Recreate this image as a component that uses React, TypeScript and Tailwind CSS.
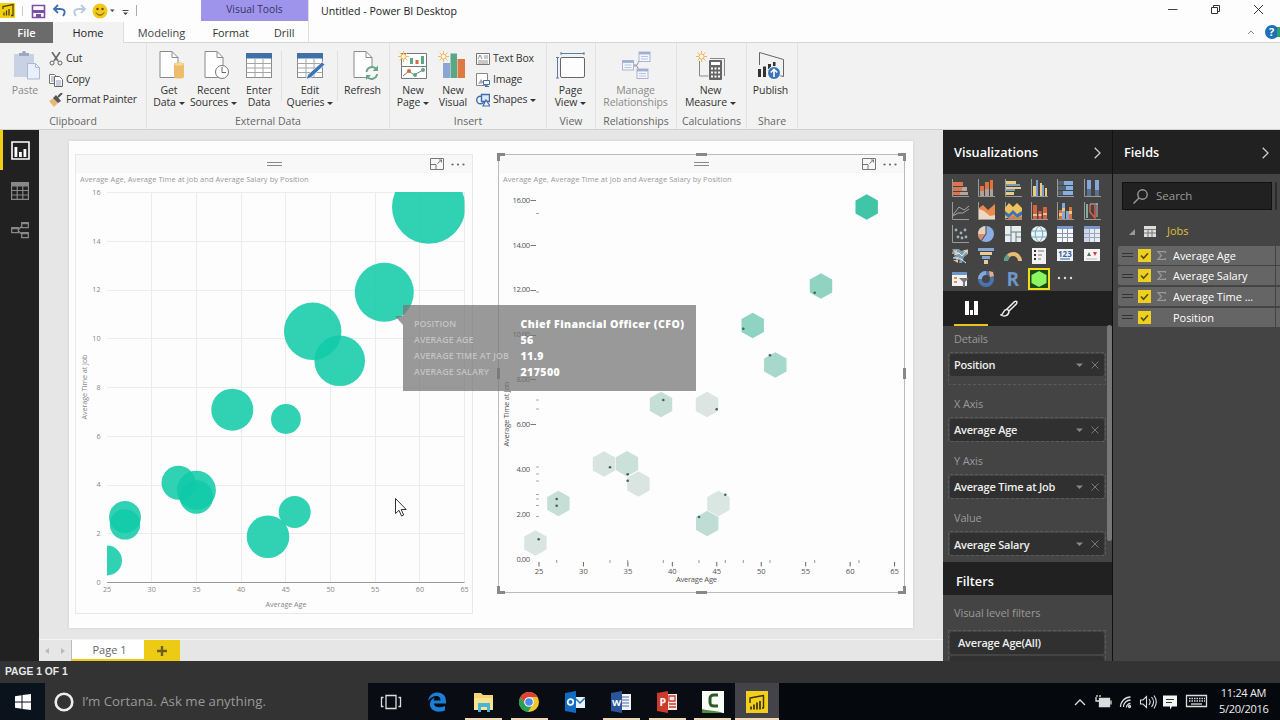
import type { ReactNode } from 'react';
import { clsx } from 'clsx';

/* ---------- chart data ---------- */

const BUBBLES = [
    { x: 428.7, y: 207, r: 36.7 },
    { x: 384.3, y: 292.3, r: 29.5 },
    { x: 312.7, y: 331.3, r: 28.7 },
    { x: 339.7, y: 360.8, r: 25.3 },
    { x: 232.3, y: 409.7, r: 21 },
    { x: 285.9, y: 419, r: 14.9 },
    { x: 178.5, y: 482.7, r: 17 },
    { x: 196.4, y: 490.2, r: 19.5 },
    { x: 196.4, y: 497, r: 16.7 },
    { x: 125, y: 517, r: 16 },
    { x: 125, y: 524.4, r: 15.2 },
    { x: 107, y: 560.5, r: 15 },
    { x: 294.7, y: 512, r: 16 },
    { x: 268, y: 536.7, r: 21.3 },
];

const HEXES = [
    { x: 866.7, y: 207, fill: '#41c5a7' },
    { x: 821, y: 286, fill: '#90d3c1' },
    { x: 752.7, y: 325.5, fill: '#8fd4c2' },
    { x: 775.3, y: 365, fill: '#a6d8cb' },
    { x: 661, y: 404.5, fill: '#c5dfd7' },
    { x: 707, y: 404.5, fill: '#dce5e2' },
    { x: 604, y: 464, fill: '#d8e4e0' },
    { x: 627, y: 463.7, fill: '#cae1d9' },
    { x: 638.4, y: 484, fill: '#dae5e1' },
    { x: 558.4, y: 503.5, fill: '#c5ded6' },
    { x: 535.4, y: 543, fill: '#dae4e1' },
    { x: 718.4, y: 503.5, fill: '#d9e6e1' },
    { x: 707.2, y: 523.5, fill: '#bfddd5' },
];

const DOTS = [
    [814.7, 292.7], [743.3, 328.7], [770, 355.3], [663.3, 400], [716.7, 409.3],
    [610, 467.3], [627.7, 474.3], [627.7, 480.7], [556.7, 499], [556.7, 505.7],
    [538.7, 539.3], [725.3, 494.7], [699, 517],
];

const RUG_X = [556.7, 610, 627.7, 663.3, 699, 725.3, 743.3, 770, 814.7, 859];
const RUG_Y = [213.5, 292, 400, 409, 467, 474, 481, 494.5, 499, 505.5, 516.5];
const AGES = [25, 30, 35, 40, 45, 50, 55, 60, 65];
const YEARS = [0, 2, 4, 6, 8, 10, 12, 14, 16];

/* ---------- ribbon ---------- */

function Caret() {
    return <span className="ml-[3px] inline-block border-x-[3px] border-t-[3px] border-x-transparent border-t-[#333] align-middle" />;
}

function Group({ label, width, children }: { label: string; width: string; children: ReactNode }) {
    return (
        <div className={clsx('flex h-full shrink-0 flex-col border-r border-[#e2e2e2]', width)}>
            <div className="flex h-[71px] shrink-0">{children}</div>
            <div className="text-center text-[10.5px] leading-[14px] text-[#666]">{label}</div>
        </div>
    );
}

interface BigButtonProps {
    lines: string[];
    width: string;
    caret?: boolean;
    muted?: boolean;
    children: ReactNode;
}

function BigButton({ lines, width, caret, muted, children }: BigButtonProps) {
    return (
        <button className={clsx('flex shrink-0 flex-col items-center pt-2 text-[10.5px] leading-[12px] tracking-[-0.080px]', width, muted ? 'text-[#8a8a8a]' : 'text-[#333]')}>
            <svg width="30" height="29" viewBox="0 0 30 29" fill="none" className="mb-1 shrink-0">{children}</svg>
            {lines.map((line, i) => (
                <span key={line} className="whitespace-nowrap">
                    {line}
                    {caret && i === lines.length - 1 && <Caret />}
                </span>
            ))}
        </button>
    );
}

function SmallButton({ label, caret, children }: { label: string; caret?: boolean; children: ReactNode }) {
    return (
        <button className="flex h-[20.5px] items-center gap-[3px] text-[10.5px] tracking-[-0.170px] whitespace-nowrap text-[#333]">
            <svg width="14" height="14" viewBox="0 0 14 14" fill="none">{children}</svg>
            <span>
                {label}
                {caret && <Caret />}
            </span>
        </button>
    );
}

function Doc() {
    return (
        <>
            <path d="M6 .5h12l6 6v20H6z" fill="#fefefe" stroke="#8a8a8a" />
            <path d="M18 .5v6h6" stroke="#8a8a8a" />
        </>
    );
}

function Sheet() {
    return (
        <>
            <rect x="2.5" y="2.5" width="25" height="24" fill="#fff" stroke="#8b8b8b" />
            <path d="M2 2h26v5.5H2z" fill="#3f6fa8" />
            <path d="M2.5 12.5h25M2.5 17h25M2.5 21.500h25M11 8v18.500M19 8v18.500" stroke="#a5a5a5" />
        </>
    );
}

function Spark() {
    return (
        <g stroke="#f0b860">
            <path d="M5.500 0v11M0 5.500h11M1.600 1.600l7.800 7.800M9.400 1.600l-7.800 7.800" />
            <circle cx="5.500" cy="5.500" r="2.500" fill="#fff6e0" />
        </g>
    );
}

function Ribbon() {
    return (
        <div className="flex h-[87px] shrink-0 border-b border-[#d0d0d0] bg-[#f2f2f2]">
            <Group label="Clipboard" width="w-[147px]">
                <BigButton lines={['Paste']} width="ml-1 w-[42px]" muted>
                    <path d="M4 3h20v23H4z" fill="#c9d2e4" />
                    <path d="M9 5V2h3a2 2 0 014 0h3v3z" fill="#9aa9c0" />
                    <path d="M17.500 12.500h8l4 4v11.500h-12z" fill="#e9f0fc" stroke="#a9b9d8" />
                    <path d="M25.500 12.500v4h4" stroke="#a9b9d8" />
                </BigButton>
                <div className="ml-[3px] flex flex-col pt-[6px]">
                    <SmallButton label="Cut">
                        <path d="M3 0l6 9M11 0L5 9" stroke="#666" strokeWidth="1.600" />
                        <circle cx="3" cy="11" r="2" stroke="#666" />
                        <circle cx="11" cy="11" r="2" stroke="#666" />
                    </SmallButton>
                    <SmallButton label="Copy">
                        <path d="M.5 1.500h5l2 2v7h-7z" fill="#fff" stroke="#777" />
                        <path d="M5.500 3.500h5l3 3v7h-8z" fill="#fff" stroke="#666" />
                        <path d="M7 8h5M7 10h5M7 12h5M2 4h3M2 6h3M2 8h3" stroke="#6c87a8" strokeWidth=".8" />
                    </SmallButton>
                    <SmallButton label="Format Painter">
                        <path d="M0 8l5-3 4 5-4 4z" fill="#e9b872" />
                        <path d="M4 5l3-3 5 6-3 2z" fill="#555" />
                        <path d="M9 4l4-4" stroke="#555" strokeWidth="2" />
                    </SmallButton>
                </div>
            </Group>

            <Group label="External Data" width="w-[243px]">
                <BigButton lines={['Get', 'Data']} width="ml-px w-[42px]" caret>
                    <Doc />
                    <path d="M20 13c0-2 10-2 10 0v13c0 2-10 2-10 0z" fill="#eebd6b" />
                    <ellipse cx="25" cy="13.300" rx="4.500" ry="1.300" fill="#f8d99c" />
                </BigButton>
                <BigButton lines={['Recent', 'Sources']} width="w-[47px]" caret>
                    <Doc />
                    <circle cx="23" cy="21" r="6.500" fill="#fff" stroke="#777" />
                    <path d="M23 16v5.500h4" stroke="#666" />
                </BigButton>
                <BigButton lines={['Enter', 'Data']} width="w-[44px]">
                    <Sheet />
                </BigButton>
                <div className="mt-2 h-[50px] w-px bg-[#e0e0e0]" />
                <BigButton lines={['Edit', 'Queries']} width="ml-px w-[54px]" caret>
                    <Sheet />
                    <path d="M27 11l3 2.500-14 13-5 2 2-5z" fill="#3c74b5" stroke="#fff" strokeWidth=".7" />
                </BigButton>
                <div className="mt-2 h-[50px] w-px bg-[#e0e0e0]" />
                <BigButton lines={['Refresh']} width="w-[49px]">
                    <Doc />
                    <circle cx="24" cy="22" r="6" fill="#f7f7f7" />
                    <path d="M18.500 21a5.500 5.500 0 0110-2.500M29 23a5.500 5.500 0 01-10 2.500" stroke="#6ba58a" strokeWidth="2" />
                    <path d="M30 14.500v5.500h-5.500zM18 29v-5h5z" fill="#6ba58a" />
                </BigButton>
            </Group>

            <Group label="Insert" width="w-[157px]">
                <BigButton lines={['New', 'Page']} width="ml-[3px] w-[40px]" caret>
                    <path d="M3.500 2.500h25v25h-25z" fill="#fff" stroke="#777" />
                    <path d="M4 15.500h24" stroke="#777" />
                    <path d="M12 7h3v6h-3z" fill="#5aa787" />
                    <path d="M17.500 9h3v4h-3z" fill="#d9673c" />
                    <path d="M23 5h3v8h-3z" fill="#5aa787" />
                    <path d="M5 25l6-5 5 4 9-5" stroke="#777" />
                    <circle cx="11" cy="20" r="2" fill="#d9673c" />
                    <circle cx="17" cy="24" r="2" fill="#5aa787" />
                    <circle cx="25" cy="19" r="2" fill="#5aa787" />
                    <Spark />
                </BigButton>
                <BigButton lines={['New', 'Visual']} width="w-[40px]">
                    <path d="M5 12h7v15H5z" fill="#8ba6d4" />
                    <path d="M12.500 2.500h6.500V27h-6.500z" fill="#5aa787" />
                    <path d="M19.500 8H27v19h-7.500z" fill="#dd7a43" />
                    <Spark />
                </BigButton>
                <div className="ml-[3px] flex flex-col pt-[6px]">
                    <SmallButton label="Text Box">
                        <path d="M.5 1.500h13v11H.5z" fill="#fff" stroke="#777" />
                        <path d="M2 7l2-4 2 4M8 4h4M8 6h4M2 9h10M2 11h10" stroke="#777" strokeWidth=".8" />
                    </SmallButton>
                    <SmallButton label="Image">
                        <path d="M.5.500h11v12H.5z" fill="#fff" stroke="#888" />
                        <path d="M2 11l3-5 3 4z" fill="#aaa" />
                        <path d="M7.500 7.500h6v4h-6zM9 13.500h4" fill="#fff" stroke="#3c6fae" />
                    </SmallButton>
                    <SmallButton label="Shapes" caret>
                        <circle cx="4.500" cy="7" r="3.800" stroke="#3f6dae" strokeWidth="1.400" />
                        <path d="M5.500 1.500h8v7h-8z" fill="#dfe8f6" stroke="#3f6dae" strokeWidth="1.400" />
                        <path d="M7 13l3-6 4 6z" fill="#f2f2f2" stroke="#3f6dae" strokeWidth="1.200" />
                    </SmallButton>
                </div>
            </Group>

            <Group label="View" width="w-[49px]">
                <BigButton lines={['Page', 'View']} width="w-[47px]" caret>
                    <rect x="4.500" y="6.500" width="24" height="20" rx="1.500" fill="#fdfdfd" stroke="#666" />
                    <path d="M5 2.500h23M5 1v3M28 1v3M1.500 6.500V27M0 6.500h3M0 27h3" stroke="#5b7ca3" />
                </BigButton>
            </Group>

            <Group label="Relationships" width="w-[81px]">
                <BigButton lines={['Manage', 'Relationships']} width="w-[79px]" muted>
                    <path d="M13 14h3l4-8M13 15h3l3 7" stroke="#999" />
                    {[[18, 1], [1.500, 9.500], [16, 18]].map(([x, y]) => (
                        <g key={y}>
                            <rect x={x} y={y} width="11" height="9.500" fill="#f4f6fc" stroke="#a9b5d4" />
                            <path d={`M${x} ${y + 1.200}h11`} stroke="#a0aed2" strokeWidth="2.400" />
                            <path d={`M${x + 2} ${y + 4.500}h7M${x + 2} ${y + 7}h7`} stroke="#b9c4dd" />
                        </g>
                    ))}
                </BigButton>
            </Group>

            <Group label="Calculations" width="w-[70px]">
                <BigButton lines={['New', 'Measure']} width="w-[67px]" caret>
                    <path d="M3.500 10v15h9M14 7.500h14.500V25" stroke="#888" />
                    <rect x="13" y="9" width="13" height="20" rx="1" fill="#666" />
                    <path d="M15 11h9v3h-9z" fill="#fff" />
                    <path d="M15 17.500h9M15 21.500h9M15 25.500h9" stroke="#fff" strokeWidth="2" strokeDasharray="2 1.500" />
                    <Spark />
                </BigButton>
            </Group>

            <Group label="Share" width="w-[51px]">
                <BigButton lines={['Publish']} width="w-[47px]">
                    <path d="M3.500 14V1.500l24 7v17l-4-1" stroke="#666" />
                    <path d="M2 18h3v8H2zM7 15.500h3V26H7zM12 13h3v10h-3zM17 11h2.500v4H17z" fill="#333" />
                    <circle cx="18" cy="22" r="6.500" fill="#3c74b5" stroke="#fff" />
                    <path d="M18 26v-7M14.800 21.500L18 18.300l3.200 3.200" stroke="#fff" strokeWidth="1.600" />
                </BigButton>
            </Group>
        </div>
    );
}

function TitleArea() {
    return (
        <div className="flex h-[43px] shrink-0 bg-[#fdfdfd]">
            <div className="flex w-[201px] flex-col">
                <div className="flex h-[22px] items-center">
                    <svg width="140" height="22" viewBox="0 0 140 22" fill="none">
                        <path d="M0 3h15v15H0z" fill="#f2d00f" />
                        <path d="M3 9V6.500l10-2v11h-2M4 15.500v-3M6.500 15.500v-5M9 15.500V9" stroke="#4d430a" strokeWidth="1.300" />
                        <path d="M22.500 6v10" stroke="#ccc" />
                        <path d="M32.500 5.500h12v12h-12z" fill="#fff" stroke="#7b4fa5" strokeWidth="1.600" />
                        <path d="M32 10h13v3H32zM36 14h5v4h-5z" fill="#7b4fa5" />
                        <path d="M58 5l-4 4 4 4M54 9h6c5 0 6 3 3 7" stroke="#3f6fae" strokeWidth="1.800" />
                        <path d="M81 5l4 4-4 4M85 9h-6c-5 0-6 3-3 7" stroke="#b9c8de" strokeWidth="1.800" />
                        <circle cx="100" cy="11" r="7.500" fill="#f4c81b" />
                        <circle cx="97.500" cy="9" r="1.200" fill="#5b4a00" />
                        <circle cx="102.500" cy="9" r="1.200" fill="#5b4a00" />
                        <path d="M96 12.500c2 3.500 6 3.500 8 0" stroke="#5b4a00" />
                        <path d="M110 9.500h4.500l-2.250 2.500zM123 12.500h5L125.500 15z" fill="#444" />
                        <path d="M122.500 10.500h6" stroke="#444" />
                        <path d="M136.500 5v11" stroke="#aaa" />
                    </svg>
                </div>
                <div className="flex h-[21px] text-[11px] leading-[22px]">
                    <div className="w-[53px] bg-[#6b6b6b] text-center font-semibold text-white">File</div>
                    <div className="w-[71px] border-r border-[#ddd] bg-[#f2f2f2] text-center text-[#222]">Home</div>
                    <div className="w-[77px] border-b border-[#d5d5d5] pr-0.5 text-center text-[#444]">Modeling</div>
                </div>
            </div>
            <div className="flex w-[108px] flex-col border-r border-[#ddd] text-[10.300px]">
                <div className="h-[21px] bg-[#9f94ec] text-center leading-[19px] text-[#3a3560]">Visual Tools</div>
                <div className="flex h-[22px] border-b border-[#d5d5d5] text-[10.800px] leading-[24px] text-[#333]">
                    <span className="w-[60px] text-center">Format</span>
                    <span className="w-[48px] text-center">Drill</span>
                </div>
            </div>
            <div className="flex flex-1 justify-between border-b border-[#d5d5d5]">
                <div className="pl-3 text-[10.600px] leading-[22px] text-[#222]">Untitled - Power BI Desktop</div>
                <svg width="120" height="42" viewBox="1160 0 120 42" fill="none">
                    <path d="M1168 9.500h9.500" stroke="#444" />
                    <path d="M1211.500 7.500h6v6h-6zM1213.500 7.500v-2h6v6h-2" stroke="#333" />
                    <path d="M1254 5l9 9M1263 5l-9 9" stroke="#333" />
                    <path d="M1248 34l3-3 3 3" stroke="#888" />
                    <circle cx="1272" cy="32" r="7" fill="#1e6fb5" />
                    <path d="M1277 27h3v10h-3z" fill="#2ba36c" />
                    <text x="1269" y="36" fontSize="11" fontWeight="700" fill="#fff">?</text>
                </svg>
            </div>
        </div>
    );
}

/* ---------- report canvas ---------- */

function VisualHeader() {
    return (
        <div className="grid h-[18px] shrink-0 grid-cols-[1fr_auto_1fr] items-center bg-[#f8f8f8]">
            <span />
            <div className="h-1 w-[15px] border-y border-[#888]" />
            <div className="flex items-center justify-end gap-[7px] pr-[7px]">
                <svg width="14" height="12" viewBox="0 0 14 12" fill="none" stroke="#777">
                    <path d="M.5.500h13v11H.5zM.5 6.500H6v5M7.500 5.500l4-3.500M9 2h2.500v2.500" />
                </svg>
                <svg width="14" height="3" viewBox="0 0 14 3" fill="#666">
                    <circle cx="1.500" cy="1.500" r="1.100" />
                    <circle cx="7" cy="1.500" r="1.100" />
                    <circle cx="12.500" cy="1.500" r="1.100" />
                </svg>
            </div>
        </div>
    );
}

function ChartTitle() {
    return (
        <p className="h-[14px] pl-1 text-[7.500px] leading-[13px] tracking-[0.055px] text-[#999]">
            Average Age, Average Time at Job and Average Salary by Position
        </p>
    );
}

function BubbleChart() {
    return (
        <div className="flex h-[460px] w-[398px] flex-col border border-[#e8e8e8]">
            <VisualHeader />
            <ChartTitle />
            <svg width="396" height="426" viewBox="76 187 396 426" fontSize="7.200" fill="#888">
                <clipPath id="plot">
                    <path d="M107 192h357.500v390.500H107z" />
                </clipPath>
                {YEARS.map((v) => (
                    <g key={v}>
                        <path d={`M107 ${Math.round(582 - v * 24.36) + 0.5}H464.500`} stroke="#ececec" />
                        <text x="100.500" y={584.800 - v * 24.36} textAnchor="end">{v}</text>
                    </g>
                ))}
                {AGES.map((v) => (
                    <g key={v}>
                        {v > 25 && <path d={`M${Math.floor(107 + (v - 25) * 8.940) + 0.500} 192V582`} stroke="#ececec" />}
                        <text x={107 + (v - 25) * 8.940} y="592" textAnchor="middle">{v}</text>
                    </g>
                ))}
                <path d="M107 582.500H464.500" stroke="#999" />
                <g clipPath="url(#plot)" fill="#0fcaa8" fillOpacity=".86">
                    {BUBBLES.map((b, i) => <circle key={i} cx={b.x} cy={b.y} r={b.r} />)}
                </g>
                <text x="286" y="607" textAnchor="middle" textLength="41">Average Age</text>
                <text transform="translate(87 387) rotate(-90)" textAnchor="middle" textLength="65">Average Time at Job</text>
            </svg>
        </div>
    );
}

function HexChart() {
    return (
        <div className="relative ml-[25px] flex h-[439px] w-[407px] flex-col border border-[#bbb]">
            <VisualHeader />
            <ChartTitle />
            <svg width="405" height="405" viewBox="499 187 405 405" fontSize="7.600" fill="#555">
                {YEARS.map((v) => (
                    <g key={v}>
                        <text x="530" y={561.700 - v * 22.440} textAnchor="end" textLength={v > 9 ? 17.500 : 13.500}>{v.toFixed(2)}</text>
                        {v > 5 && <path d={`M530.500 ${Math.round(559 - v * 22.440) + 0.500}h5.500`} stroke="#777" />}
                    </g>
                ))}
                {AGES.map((v) => (
                    <g key={v}>
                        <path d={`M${539 + (v - 25) * 8.890} 562v4.500`} stroke="#666" />
                        <text x={539 + (v - 25) * 8.890} y="573.500" textAnchor="middle">{v}</text>
                    </g>
                ))}
                {RUG_X.map((x) => <path key={x} d={`M${x} 560v3`} stroke="#999" />)}
                {RUG_Y.map((y) => <path key={y} d={`M536 ${y}h3`} stroke="#aaa" />)}
                {HEXES.map((h, i) => (
                    <path key={i} d={`M${h.x} ${h.y - 12.700}l11.200 6.300v12.800l-11.200 6.300l-11.200-6.300v-12.800z`} fill={h.fill} />
                ))}
                {DOTS.map(([x, y], i) => <circle key={i} cx={x} cy={y} r="1.300" fill="#44635c" />)}
                <text x="696.500" y="582.200" textAnchor="middle" textLength="41">Average Age</text>
                <text transform="translate(509 414) rotate(-90)" textAnchor="middle" textLength="65">Average Time at Job</text>
            </svg>
            {/* resize handles */}
            <span className="absolute -top-0.5 -left-0.5 size-2 border-t-3 border-l-3 border-[#888]" />
            <span className="absolute -top-0.5 -right-0.5 size-2 border-t-3 border-r-3 border-[#888]" />
            <span className="absolute -bottom-0.5 -left-0.5 size-2 border-b-3 border-l-3 border-[#888]" />
            <span className="absolute -right-0.5 -bottom-0.5 size-2 border-r-3 border-b-3 border-[#888]" />
            <span className="absolute -top-0.5 left-[197px] h-[3px] w-[11px] bg-[#888]" />
            <span className="absolute -bottom-0.5 left-[197px] h-[3px] w-[11px] bg-[#888]" />
            <span className="absolute top-[213px] -left-0.5 h-[11px] w-[3px] bg-[#888]" />
            <span className="absolute top-[213px] -right-0.5 h-[11px] w-[3px] bg-[#888]" />
        </div>
    );
}

function Tooltip() {
    const rows = [
        ['POSITION', 'Chief Financial Officer (CFO)'],
        ['AVERAGE AGE', '56'],
        ['AVERAGE TIME AT JOB', '11.9'],
        ['AVERAGE SALARY', '217500'],
    ];
    return (
        <div className="absolute top-[164px] left-[334px] h-[86px] w-[293px] bg-[#777]/75 pt-[11.500px] pl-[11px]">
            <svg width="8" height="9" viewBox="0 0 8 9" className="absolute top-[11px] -left-[8px]">
                <path d="M0 0l8 0v9z" fill="#777" fillOpacity=".75" />
            </svg>
            {rows.map(([label, value]) => (
                <div key={label} className="flex h-4 items-center whitespace-nowrap">
                    <span className="w-[106.500px] text-[8.800px] font-semibold tracking-[0.120px] text-[#c4c4c4]">{label}</span>
                    <span className="text-[10.500px] font-extrabold tracking-[0.450px] text-white">{value}</span>
                </div>
            ))}
        </div>
    );
}

function Canvas() {
    return (
        <div className="flex w-[904px] shrink-0 flex-col bg-[#e6e6e6]">
            <div className="relative mt-[11px] ml-[30px] flex h-[487px] w-[844px] items-start bg-[#fdfdfd] pt-[13px] pl-[6px] shadow-[0_0_3px_#ccc]">
                <BubbleChart />
                <HexChart />
                <Tooltip />
                <svg width="12" height="19" viewBox="0 0 12 19" className="absolute top-[357px] left-[326px]" fill="#fff" stroke="#333">
                    <path d="M.5.500v15l3.500-3.200 2.500 5.700 2.200-1-2.500-5.500h5z" />
                </svg>
            </div>
            <div className="mt-[11px] flex h-[22px] border-t border-[#f5f5f5]">
                <div className="flex w-[33px] items-center justify-between border-r border-[#bbb] px-1.5">
                    <svg width="4" height="6" viewBox="0 0 4 6" fill="#bbb"><path d="M4 0v6L0 3z" /></svg>
                    <svg width="4" height="6" viewBox="0 0 4 6" fill="#bbb"><path d="M0 0v6l4-3z" /></svg>
                </div>
                <div className="w-[72px] border-b-2 border-[#f0cb0c] bg-white pl-[3px] text-center text-[11px] leading-[20px] text-[#666]">Page 1</div>
                <div className="flex w-9 items-center justify-center bg-[#edcb14]">
                    <svg width="10" height="10" viewBox="0 0 10 10" stroke="#6b601e" strokeWidth="2.400"><path d="M5 0v10M0 5h10" /></svg>
                </div>
            </div>
        </div>
    );
}

function SideNav() {
    return (
        <div className="w-[39px] shrink-0 bg-[#212121]">
            <div className="flex h-[40px] items-center border-l-3 border-[#f2cf11] pt-px pl-2">
                <svg width="19" height="19" viewBox="0 0 19 19" fill="none">
                    <path d="M1 1h17v17H1z" stroke="#fff" strokeWidth="1.600" />
                    <path d="M3.500 6h2.800v10H3.500zM8 11h2.800v5H8zM12.500 8h2.800v8h-2.800z" fill="#fff" />
                </svg>
            </div>
            <div className="flex h-[40px] items-center pt-px pl-[11px]">
                <svg width="18" height="18" viewBox="0 0 18 18" fill="none" stroke="#888" strokeWidth="1.200">
                    <path d="M.6.600h16.800v16.800H.6zM.6 8.500h16.800M.6 13h16.800M6.200 4v13M11.800 4v13" />
                    <path d="M0 2.500h18" strokeWidth="4" />
                </svg>
            </div>
            <div className="flex h-[39px] items-center pl-[11px]">
                <svg width="18" height="18" viewBox="0 0 18 18" fill="none" stroke="#888" strokeWidth="1.300">
                    <path d="M.7 6.700h6.600v5H.7zM10.700 1.700h6.600v5h-6.600zM10.700 11.700h6.600v5h-6.600zM7 9l4-4M7 9.500l4 4" />
                    <path d="M.7 7.200h6.600M10.700 2.200h6.600M10.700 12.200h6.600" strokeWidth="2" />
                </svg>
            </div>
        </div>
    );
}

/* ---------- visualizations pane ---------- */

const AXIS = <path d="M1.500 0v17.500H18" stroke="#9a9a9a" fill="none" />;

// one entry per cell of the gallery, left to right and top to bottom
const GALLERY: ReactNode[] = [
    <>{AXIS}<path d="M2 3h10v4H2zM2 8h9v4H2zM2 13h7v3H2z" fill="#d9764f" /><path d="M11 8h5v4h-5zM9 13h8v3H9z" fill="#b7a5a0" /></>,
    <>{AXIS}<path d="M3 7h4v5H3zM8 3h4v7H8zM13 1h3v9h-3z" fill="#e0703d" /><path d="M3 12h4v5H3zM8 10h4v7H8zM13 10h3v7h-3z" fill="#b0a09a" /></>,
    <>{AXIS}<path d="M2 2h10v3H2zM2 8h15v2H2zM2 13h8v3H2z" fill="#eacb80" /><path d="M2 5h14v2H2zM2 10h9v2H2z" fill="#7a9ac0" /></>,
    <>{AXIS}<path d="M3 7h3v10H3zM10 4h2v13h-2zM15 9h2v8h-2z" fill="#eacb80" /><path d="M6 1h2v16H6zM12 6h2v11h-2z" fill="#7899d0" /></>,
    <>{AXIS}<path d="M2 2h6v4H2zM2 7h8v4H2zM2 12h5v4H2z" fill="#56616e" /><path d="M8 2h9v4H8zM10 7h7v4h-7zM7 12h10v4H7z" fill="#86aede" /></>,
    <>{AXIS}<path d="M4 1h4v9H4zM12 1h4v10h-4z" fill="#86a6d8" /><path d="M4 10h4v7H4zM12 11h4v6h-4z" fill="#5b6f90" /></>,
    <>{AXIS}<path d="M2 13l6-8 5 3 5-4M2 14l5-3 5 0 6-4" stroke="#a5a5a5" fill="none" /></>,
    <>{AXIS}<path d="M2 6l4-3 5 5 7-6v15H2z" fill="#e98a4c" /><path d="M2 7l5 2 6 5 5-1v4H2z" fill="#edd6c2" /></>,
    <>{AXIS}<path d="M1 6l4-5 4 4 4-4 5 5v10H1z" fill="#f0c15f" /><path d="M1 9l4 3 4-4 4 4 5-3v4l-5 3-4-4-4 4-4-3z" fill="#3674b8" /><path d="M1 14l4 3h13v-3l-5 2-4-3-4 3z" fill="#e27a3d" /></>,
    <>{AXIS}<path d="M3 3h4v14H3zM8.500 9h3v8h-3zM13 5h4v12h-4z" fill="#dc6038" /><path d="M3 12h4v2H3zM8.500 12h3v2h-3zM13 11h4v2h-4z" fill="#e4bda8" /></>,
    <>{AXIS}<path d="M3 8h3v9H3zM13 5h3v12h-3z" fill="#e0703d" /><path d="M6 1h3v16H6zM10 9h3v8h-3z" fill="#86a6d8" /><path d="M3 11h3v3H3zM6 6h3v3H6zM13 9h3v3h-3z" fill="#ecc877" /></>,
    <>{AXIS}<path d="M4 2v14" stroke="#7fae9d" strokeWidth="2" fill="none" /><path d="M7 2v8l5 6V3" stroke="#d4604a" strokeWidth="1.500" fill="none" /><path d="M14 1v14M7 2h8" stroke="#bbb" fill="none" /></>,
    <>{AXIS}<g fill="#9fb3bd"><circle cx="5" cy="5" r="1.400" /><circle cx="10" cy="8" r="1.400" /><circle cx="14" cy="5" r="1.400" /><circle cx="7" cy="12" r="1.400" /><circle cx="15" cy="12" r="1.400" /><circle cx="11" cy="13" r="1.400" /></g></>,
    <><circle cx="9" cy="9" r="8" fill="#8caee0" /><path d="M9 9V1a8 8 0 00-8 8z" fill="#e8d0b8" /><path d="M9 9H1a8 8 0 003.500 6.500z" fill="#d98b6b" /><path d="M9 1v8l-4.500 6.500" stroke="#445" fill="none" /></>,
    <><path d="M1 1h16v16H1z" fill="#e6eef0" /><path d="M7 1v16M1 10h6M7 7h10M12 7v10M12 12h5" stroke="#6b7a80" fill="none" /></>,
    <><circle cx="9" cy="9" r="8" fill="#e8f5fa" /><path d="M1.500 6h15M1.500 12h15M9 1C4 5 4 13 9 17M9 1c5 4 5 12 0 16" stroke="#78a3b4" fill="none" /></>,
    <><path d="M1 1h16v16H1z" fill="#f5f7fa" /><path d="M1 1h16v3H1z" fill="#7899c8" /><path d="M1 8.500h16M1 12.500h16M6.500 4v13M11.500 4v13" stroke="#8a98a8" fill="none" /></>,
    <><path d="M1 1h16v16H1z" fill="#e6ebf4" /><path d="M1 1h16v3H1z" fill="#7899c8" /><path d="M1 4h5v13H1z" fill="#ccd6e8" /><path d="M1 8.500h16M1 12.500h16M6.500 4v13M11.500 4v13" stroke="#9aa8bc" fill="none" /></>,
    <><path d="M1 2h7l2 2 7-2v5l-4 3-2 6H8l1-4-7-1 3-3z" fill="#7f9cb5" /><path d="M1 4l5-1v3zM12 3l5 0v4zM2 13h5v3z" fill="#e6c791" /><path d="M3 8l5-2 3 3 4-5M5 12l5 0 5 4M1 6h7M2 11h6" stroke="#e8ecef" fill="none" /></>,
    <><path d="M1 1h16v3H1zM5 9h8v3H5z" fill="#86a6d8" /><path d="M3 5h12v3H3zM7 13h4v4H7z" fill="#e9cc91" /></>,
    <><path d="M2 14a7 7 0 0114 0" stroke="#e6bd72" strokeWidth="4" fill="none" /><path d="M2 14a7 7 0 012.500-5.300" stroke="#5f9b8c" strokeWidth="4" fill="none" /></>,
    <><path d="M2 1h14v16H2z" fill="#f2f2f2" /><path d="M4 3h2v2H4zM4 7h2v2H4zM4 11h2v2H4z" fill="#333" /><path d="M8 4h6M8 8h4M8 12h3" stroke="#777" /></>,
    <><path d="M1 2h16v12H1z" fill="#f2f5f8" /><text x="2" y="9.500" fontSize="8" fontWeight="700" fill="#3c6796">123</text><path d="M4 12h10" stroke="#6d93bb" strokeWidth="1.500" /></>,
    <><path d="M1 2h16v12H1z" fill="#f4f4f4" /><path d="M4 9l2-4 2 4z" fill="#666" /><path d="M10 5h4l-2 4z" fill="#d33c3c" /><path d="M3 12h11" stroke="#bbb" /></>,
    <><path d="M1 2h15v14H1z" fill="#f2f2f2" /><path d="M1 2h15v3H1z" fill="#6b95c4" /><path d="M3 7h3v2H3zM3 11h3v2H3z" fill="#e39150" /><path d="M8 8h10l-4 4v5h-2v-5z" fill="#777" /></>,
    <><circle cx="9" cy="9" r="6" stroke="#4a74ae" strokeWidth="4" fill="none" /><path d="M9 3a6 6 0 00-6 6" stroke="#86a6d8" strokeWidth="4" fill="none" /><path d="M12 1l4 1 1 4-4 1z" fill="#e8ad85" /></>,
    <text x="2.500" y="15.500" fontSize="19" fontWeight="700" fill="#6f96c8">R</text>,
    <><path d="M0 0h18v18H0z" fill="#1d4a16" /><path d="M9 1l7.500 4v8L9 17l-7.500-4V5z" fill="#8cf562" /></>,
    <g fill="#ddd"><circle cx="3" cy="8" r="1.200" /><circle cx="9" cy="8" r="1.200" /><circle cx="15" cy="8" r="1.200" /></g>,
];

function PaneHeader({ title }: { title: string }) {
    return (
        <div className="flex h-[44px] shrink-0 items-center justify-between bg-[#212121] px-[11px] pt-[2px]">
            <h2 className="text-[12.700px] font-semibold text-white">{title}</h2>
            <svg width="7" height="12" viewBox="0 0 7 12" fill="none" stroke="#ccc" strokeWidth="1.300"><path d="M.7.700L6 6 .7 11.300" /></svg>
        </div>
    );
}

function Well({ label, field, tall }: { label: string; field: string; tall?: boolean }) {
    return (
        <div className={clsx('shrink-0 px-[5px]', tall ? 'h-[65px]' : 'h-[57.200px]')}>
            <div className="h-[26px] pl-[6px] text-[11px] leading-[26px] tracking-[-0.150px] text-[#999]">{label}</div>
            <div className={clsx('w-[158px] rounded-xs border border-dashed border-[#5c5c5c] px-px pt-px', tall ? 'h-[33px]' : 'h-[25px]')}>
                <div className="flex h-[22px] items-center rounded-xs bg-[#303030] pl-1">
                    <span className="flex-1 pt-px text-[11px] font-semibold tracking-[-0.220px] text-[#eee]">{field}</span>
                    <svg width="30" height="10" viewBox="0 0 30 10" fill="none">
                        <path d="M2 3.500h7L5.500 7z" fill="#888" />
                        <path d="M17.500 1.500l7 7M24.500 1.500l-7 7" stroke="#777" />
                    </svg>
                </div>
            </div>
        </div>
    );
}

function Visualizations() {
    return (
        <div className="relative flex w-[170px] shrink-0 flex-col overflow-hidden border-r border-[#111] bg-[#444]">
            <PaneHeader title="Visualizations" />
            <div className="grid h-[117px] shrink-0 grid-cols-[repeat(6,26.300px)] grid-rows-[repeat(5,22.700px)] place-items-center pt-[3px] pl-1">
                {GALLERY.map((icon, i) => (
                    <svg key={i} width="18" height="18" viewBox="0 0 18 18" className={clsx('overflow-visible', i === 27 && 'outline-2 outline-[#f1dc1c]')}>
                        {icon}
                    </svg>
                ))}
            </div>
            <div className="flex h-[35px] shrink-0 bg-[#212121] pl-[11px]">
                <div className="flex w-[34px] items-center justify-center border-b-2 border-[#e8c51a]">
                    <svg width="15" height="16" viewBox="0 0 15 16" fill="#fff"><path d="M1 1h4v14H1zM6 10h3v5H6zM10 1h4v14h-4z" /></svg>
                </div>
                <div className="flex w-[42px] items-center justify-center">
                    <svg width="18" height="18" viewBox="0 0 18 18" fill="none" stroke="#eee" strokeWidth="1.500">
                        <path d="M7 9l7.500-7.300c2-1 3 0 2 2L9 11zM7 9.500C3 9 4 14 1 15c3 2 8 1 8-4" />
                    </svg>
                </div>
            </div>
            <Well label="Details" field="Position" tall />
            <Well label="X Axis" field="Average Age" />
            <Well label="Y Axis" field="Average Time at Job" />
            <Well label="Value" field="Average Salary" />
            <div className="-mt-px h-[33px] shrink-0 bg-[#212121] pl-[13px] text-[12.700px] leading-[38px] font-semibold text-white">Filters</div>
            <div className="shrink-0 pl-[11px] text-[11px] leading-[35px] tracking-[-0.100px] text-[#999]">Visual level filters</div>
            <div className="ml-[5px] w-[158px] border border-dashed border-[#5c5c5c] p-px">
                <div className="h-[22px] rounded-xs bg-[#303030] pl-2 text-[11px] leading-[22px] font-semibold tracking-[-0.200px] text-[#eee]">Average Age(All)</div>
                <div className="mt-0.5 h-[22px] rounded-xs bg-[#303030]" />
            </div>
            <div className="absolute top-[195px] right-0 h-[216px] w-[5px] rounded-full bg-[#777]" />
        </div>
    );
}

/* ---------- fields pane ---------- */

const FIELDS = [
    { name: 'Average Age', measure: true },
    { name: 'Average Salary', measure: true },
    { name: 'Average Time ...', measure: true },
    { name: 'Position', measure: false },
];

function Fields() {
    return (
        <div className="flex flex-1 flex-col bg-[#444]">
            <PaneHeader title="Fields" />
            <div className="mt-2 flex gap-[3px] pl-[9px]">
                <div className="flex h-7 w-[150px] items-center gap-[8px] border border-[#111] bg-[#212121] pl-[10px]">
                    <svg width="15" height="15" viewBox="0 0 15 15" fill="none" stroke="#999" strokeWidth="1.400">
                        <circle cx="9.500" cy="5.500" r="4.700" />
                        <path d="M6 9L.5 14.500" />
                    </svg>
                    <span className="text-[11.500px] text-[#999]">Search</span>
                </div>
                <div className="h-7 w-0.5 bg-[#2b2b2b]" />
            </div>
            <div className="mt-[10px] flex h-[23px] items-center pl-4">
                <svg width="6" height="6" viewBox="0 0 6 6" fill="#999"><path d="M6 0v6H0z" /></svg>
                <svg width="12" height="11" viewBox="0 0 12 11" className="ml-[9px]">
                    <path d="M0 0h12v11H0z" fill="#ddd" />
                    <path d="M0 3.500h12M0 7h12M4 3v8M8 3v8" stroke="#777" fill="none" />
                </svg>
                <span className="ml-[11px] text-[11px] text-[#dfc13c]">Jobs</span>
            </div>
            <div className="mt-[2.500px] flex flex-col gap-[1.500px] pl-[5px]">
                {FIELDS.map((f) => (
                    <div key={f.name} className="flex h-[19.200px] gap-px">
                        <div className="flex w-[157px] items-center rounded-l-xs bg-[#656565] pl-[4px]">
                            <span className="h-[4px] w-[11px] border-y border-[#333]" />
                            <svg width="13" height="13" viewBox="0 0 13 13" className="ml-[5px]" fill="none">
                                <path d="M0 0h13v13H0z" fill="#eed01f" />
                                <path d="M3 6.500l2.500 2.700L10 4.300" stroke="#5e500a" strokeWidth="1.700" />
                            </svg>
                            <svg width="9" height="9" viewBox="0 0 9 9" className="ml-[6px]" fill="none" stroke="#999" strokeWidth="1.200">
                                {f.measure && <path d="M8.500 2V.6H1l3.500 3.900L1 8.400h7.500V7" />}
                            </svg>
                            <span className="ml-[7px] pt-[1.500px] text-[11px] tracking-[-0.050px] whitespace-nowrap text-white">{f.name}</span>
                        </div>
                        <div className="flex-1 bg-[#656565]" />
                    </div>
                ))}
            </div>
        </div>
    );
}

/* ---------- taskbar ---------- */

interface TaskIconProps {
    width: string;
    open?: boolean;
    active?: boolean;
    children: ReactNode;
}

function TaskIcon({ width, open, active, children }: TaskIconProps) {
    return (
        <div className={clsx('flex h-full flex-col items-center justify-between pt-2', width, active && 'bg-[#444349]')}>
            <svg width="22" height="22" viewBox="0 0 22 22" fill="none">{children}</svg>
            <div className={clsx('h-[2px]', active ? 'w-full' : 'w-[37px]', open && 'bg-[#efd9b4]')} />
        </div>
    );
}

function Taskbar() {
    return (
        <div className="flex h-[37px] shrink-0 bg-[#090c12] text-white">
            <div className="flex w-[45px] items-center justify-center bg-[#0a121b]">
                <svg width="16" height="16" viewBox="0 0 16 16" fill="#fff">
                    <path d="M0 2.200l6.500-1v6.300H0zM7.500 1L16 0v7.500H7.500zM0 8.500h6.500v6.300l-6.500-1zM7.500 8.500H16V16l-8.500-1z" />
                </svg>
            </div>
            <div className="flex w-[323px] items-center bg-[#333]">
                <svg width="20" height="22" viewBox="0 0 20 22" className="ml-[9px]" fill="none">
                    <circle cx="10" cy="11" r="8.300" stroke="#eee" strokeWidth="2.600" />
                </svg>
                <span className="ml-[8px] pt-px text-[13.300px] text-[#999]">I’m Cortana. Ask me anything.</span>
            </div>
            <TaskIcon width="w-[45px]">
                <path d="M6 4.500h10v13H6zM3.500 6.500h-2v9h2M18.500 6.500h2v9h-2" stroke="#ddd" strokeWidth="1.300" />
            </TaskIcon>
            <TaskIcon width="w-[48px]">
                <path d="M2 10C3 4 7 1.500 11.500 1.500c6 0 9 4 8.500 11H8c0 4 6 5 11 2.500v4.500C9 23 3 18 4 12c.5-3 3-5 5-5.500C8 8 7.800 8.500 7.700 9.500h6.800c0-3-1.500-4.500-4-4.500C7 5 4 7 2 10z" fill="#1b7fd8" />
            </TaskIcon>
            <TaskIcon width="w-[45px]" open>
                <path d="M1 2h7l2 2h10v15H1z" fill="#f3d674" />
                <path d="M1 7h19v12H1z" fill="#f9e38f" />
                <path d="M5 12h12v9h-3v-5H8v5H5z" fill="#48b6dc" />
            </TaskIcon>
            <TaskIcon width="w-[46px]" open>
                <circle cx="11" cy="11" r="10" fill="#f1c730" />
                <path d="M2.300 6A10 10 0 0119.700 6H11l-4 7z" fill="#da4437" />
                <path d="M2.300 6A10 10 0 0010 21l4.500-7.500-7.500 0z" fill="#2a9d57" />
                <circle cx="11" cy="11" r="4.800" fill="#fff" />
                <circle cx="11" cy="11" r="3.800" fill="#4a8af4" />
            </TaskIcon>
            <TaskIcon width="w-[46px]">
                <path d="M11 6h10v11H11z" fill="#eaf2fa" />
                <path d="M12 8l4 4 5-5" stroke="#1b73c5" strokeWidth="1.500" />
                <path d="M1 2l11-2v22L1 20z" fill="#0f6cc0" />
                <circle cx="6.500" cy="11" r="2.800" stroke="#fff" strokeWidth="1.700" />
            </TaskIcon>
            <TaskIcon width="w-[46px]" open>
                <path d="M11 3h10v16H11z" fill="#f2f5fa" />
                <path d="M12 6h7M12 9h7M12 12h7M12 15h7" stroke="#4b6fae" />
                <path d="M1 2l11-2v22L1 20z" fill="#2a5699" />
                <text x="2" y="14.500" fontSize="9.500" fontWeight="700" fill="#fff">W</text>
            </TaskIcon>
            <TaskIcon width="w-[46px]" open>
                <path d="M11 3h10v16H11z" fill="#f6e8e4" />
                <path d="M13 5h6v5h-6zM13 13h7M13 16h7" stroke="#c8402f" strokeWidth="1.300" />
                <path d="M1 2l11-2v22L1 20z" fill="#cb3b2b" />
                <text x="3.500" y="15" fontSize="10.500" fontWeight="700" fill="#fff">P</text>
            </TaskIcon>
            <TaskIcon width="w-[45px]" open>
                <path d="M0 0h22v22H0z" fill="#fafcf8" />
                <path d="M16 4h-4c-3 0-4 1-4 4v3c0 3 1 4 4 4h4" stroke="#2c5c26" strokeWidth="3" />
                <path d="M0 18c5 2 14 1 21 4H0z" fill="#4f8b38" />
            </TaskIcon>
            <TaskIcon width="w-[44px]" open active>
                <path d="M0 0h22v22H0z" fill="#f1cf1c" />
                <path d="M4 12V7l13.500-2.500V17H16" stroke="#3a3306" strokeWidth="1.400" strokeLinejoin="round" />
                <path d="M5 18.500v-3M8 18.500v-5M11 18.500v-7M14 18.500V10" stroke="#3a3306" strokeWidth="1.700" />
            </TaskIcon>
            <div className="flex flex-1 items-center justify-end bg-[#05080d] pr-3">
                <svg width="140" height="24" viewBox="1070 690 140 24" fill="none" stroke="#ddd" strokeWidth="1.300">
                    <path d="M1075 705l5-5 5 5" />
                    <path d="M1099.500 698.500h10v8h-10z" fill="#ddd" />
                    <path d="M1096 697v4h3M1097 695v2M1100 695v2M1111 700.500v4" />
                    <path d="M1120.500 707a10 10 0 0110-10M1123.500 707a7 7 0 017-7M1126.500 707.500a4 4 0 014-4" />
                    <circle cx="1129.500" cy="706.500" r="1" />
                    <path d="M1140.500 700h2.500l3.500-3.500v11L1143 704h-2.500zM1149 699c1.500 2 1.500 4 0 6M1151.500 697c2.500 3 2.500 7 0 10M1154 695.500c2.800 4 2.800 9 0 13" strokeWidth="1.100" />
                    <path d="M1163 695.500h14v11h-5l-2 3v-3h-7z" fill="#f4f4f4" stroke="none" />
                    <path d="M1166 699.500h8M1166 702.500h6" stroke="#333" strokeWidth="1" />
                    <path d="M1186.500 695.500h20v11h-20z" />
                    <path d="M1189 698.500h16M1189 701h16" strokeDasharray="1.500 1" />
                    <path d="M1191 704h11" />
                </svg>
                <div className="ml-[9px] w-[49px] pb-px text-center text-[11px] leading-[16px] tracking-[-0.300px] whitespace-nowrap text-[#eee]">
                    <div>11:24 AM</div>
                    <div>5/20/2016</div>
                </div>
            </div>
        </div>
    );
}

export default function App() {
    return (
        <div className="flex h-[720px] w-[1280px] flex-col overflow-hidden bg-[#333] font-['Open_Sans','Noto_Sans',sans-serif]">
            <TitleArea />
            <Ribbon />
            <div className="flex h-[531px] shrink-0 overflow-hidden">
                <SideNav />
                <Canvas />
                <Visualizations />
                <Fields />
            </div>
            <div className="h-[22px] shrink-0 pl-[5px] font-['Liberation_Sans',sans-serif] text-[10.300px] leading-[21px] font-bold text-[#e8e8e8]">PAGE 1 OF 1</div>
            <Taskbar />
        </div>
    );
}
